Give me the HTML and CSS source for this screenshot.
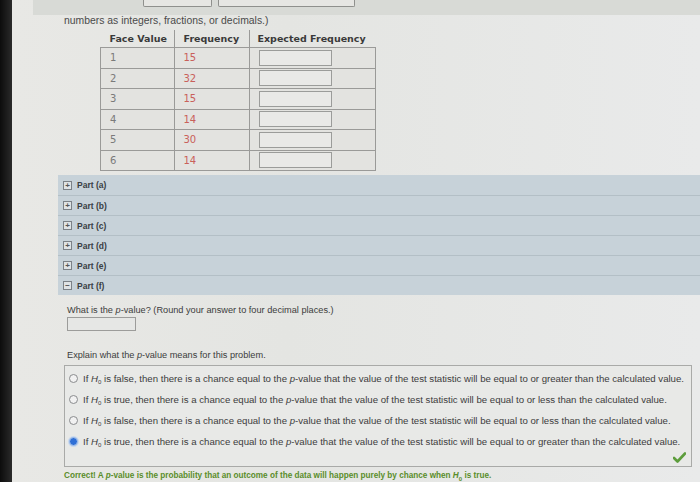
FILE: index.html
```html
<!DOCTYPE html>
<html>
<head>
<meta charset="utf-8">
<link rel="stylesheet" href="styles.css">
</head>
<body>
<div class="bezel"></div>
<div class="screen">
  <div class="topband">
    <div class="stub stub-a"></div>
    <div class="stub stub-b"></div>
  </div>
  <div class="panel">
    <p class="intro">numbers as integers, fractions, or decimals.)</p>
    <table class="freq">
      <thead>
        <tr><th class="c1">Face Value</th><th class="c2">Frequency</th><th class="c3">Expected Frequency</th></tr>
      </thead>
      <tbody>
        <tr><td class="fv">1</td><td class="fr">15</td><td><span class="cellbox"></span></td></tr>
        <tr><td class="fv">2</td><td class="fr">32</td><td><span class="cellbox"></span></td></tr>
        <tr><td class="fv">3</td><td class="fr">15</td><td><span class="cellbox"></span></td></tr>
        <tr><td class="fv">4</td><td class="fr">14</td><td><span class="cellbox"></span></td></tr>
        <tr><td class="fv">5</td><td class="fr">30</td><td><span class="cellbox"></span></td></tr>
        <tr><td class="fv">6</td><td class="fr">14</td><td><span class="cellbox"></span></td></tr>
      </tbody>
    </table>
    <div class="parts">
      <div class="part"><span class="tog">+</span>Part (a)</div>
      <div class="part"><span class="tog">+</span>Part (b)</div>
      <div class="part"><span class="tog">+</span>Part (c)</div>
      <div class="part"><span class="tog">+</span>Part (d)</div>
      <div class="part"><span class="tog">+</span>Part (e)</div>
      <div class="part"><span class="tog minus">&minus;</span>Part (f)</div>
    </div>
    <div class="qarea">
      <p class="q">What is the <i>p</i>-value? (Round your answer to four decimal places.)</p>
      <div class="answer"></div>
      <p class="q explain">Explain what the <i>p</i>-value means for this problem.</p>
      <div class="choices">
        <div class="opt"><span class="radio"></span>If <i>H</i><sub>0</sub> is false, then there is a chance equal to the <i>p</i>-value that the value of the test statistic will be equal to or greater than the calculated value.</div>
        <div class="opt"><span class="radio"></span>If <i>H</i><sub>0</sub> is true, then there is a chance equal to the <i>p</i>-value that the value of the test statistic will be equal to or less than the calculated value.</div>
        <div class="opt"><span class="radio"></span>If <i>H</i><sub>0</sub> is false, then there is a chance equal to the <i>p</i>-value that the value of the test statistic will be equal to or less than the calculated value.</div>
        <div class="opt"><span class="radio on"></span>If <i>H</i><sub>0</sub> is true, then there is a chance equal to the <i>p</i>-value that the value of the test statistic will be equal to or greater than the calculated value.</div>
        <div class="checkrow">
          <svg class="check" width="13" height="11" viewBox="0 0 13 11"><path d="M1 6 L4.5 9.5 L12 1.5" fill="none" stroke="#5d9d3c" stroke-width="2.6" stroke-linecap="round" stroke-linejoin="round"/></svg>
        </div>
      </div>
      <p class="correct">Correct! A <i>p</i>-value is the probability that an outcome of the data will happen purely by chance when <i>H</i><sub>0</sub> is true.</p>
    </div>
  </div>
</div>
</body>
</html>
```

FILE: styles.css
```css
html, body {
  margin: 0;
  padding: 0;
  height: 100%;
  overflow: hidden;
}
body {
  display: flex;
  background: #e7e7e4;
  font-family: "Liberation Sans", Arial, sans-serif;
  color: #3a3a3a;
}
.bezel {
  width: 12px;
  flex: none;
  background: linear-gradient(90deg, #0c0c0c, #2a2a2a);
}
.screen {
  flex: 1;
  display: flex;
  flex-direction: column;
  background: linear-gradient(90deg, #e8e8e5 0%, #e4e5e2 40%, #e9eaea 100%);
}
.topband {
  height: 15px;
  margin-left: 21px;
  background: #d8dad6;
  display: flex;
  align-items: flex-start;
  padding-left: 110px;
  gap: 6px;
}
.stub {
  height: 6px;
  border: 1px solid #8f908d;
  border-top: none;
  border-radius: 0 0 2px 2px;
  background: #e6e6e3;
}
.stub-a { width: 67px; }
.stub-b { width: 135px; }
.panel {
  margin-left: 46px;
  display: flex;
  flex-direction: column;
}
.intro {
  margin: 0;
  padding-left: 6px;
  font-size: 10.4px;
  line-height: 12px;
  color: #4a4a4a;
}
.freq {
  align-self: flex-start;
  margin: 3px 0 0 42px;
  border-collapse: collapse;
  table-layout: fixed;
  width: 273px;
  font-family: "DejaVu Sans", Verdana, sans-serif;
}
.freq th {
  height: 17px;
  font-size: 9.5px;
  font-weight: bold;
  color: #3a3a3a;
  text-align: left;
  padding: 0 0 0 9px;
  border: 1px solid #9a9a98;
  border-top: none;
  white-space: nowrap;
}
.freq th.c1 { width: 64px; border-left: none; }
.freq th.c2 { width: 65px; }
.freq th.c3 { width: 118px; border-right: none; padding-left: 8px; }
.freq td {
  height: 19.5px;
  padding: 0 0 0 9px;
  font-size: 10px;
  border: 1px solid #9a9a98;
  background: #e3e3e0;
}
.freq td.fv { color: #7a7a7a; }
.freq td.fr { color: #c9605a; }
.cellbox {
  display: block;
  width: 71px;
  height: 14px;
  border: 1px solid #9b9c9a;
  background: #e9e9e7;
}
.parts {
  margin-top: 4px;
  background: #c7d2d9;
  display: flex;
  flex-direction: column;
}
.part {
  height: 19px;
  display: flex;
  align-items: center;
  padding-left: 5px;
  font-size: 8.5px;
  font-weight: bold;
  color: #3a3f44;
  border-top: 1px solid #b3bfc6;
}
.part:first-child { border-top: none; height: 20px; }
.tog {
  width: 7px;
  height: 7px;
  border: 1px solid #7b8187;
  background: #dfe3e5;
  margin-right: 5px;
  font-size: 8px;
  line-height: 7px;
  text-align: center;
  color: #555;
  font-weight: bold;
}
.qarea {
  display: flex;
  flex-direction: column;
  padding-left: 6px;
}
.q {
  margin: 9px 0 0 3px;
  font-size: 9.2px;
  line-height: 12px;
  color: #3c3c3c;
}
.answer {
  margin: 1px 0 0 3px;
  width: 67px;
  height: 12px;
  border: 1px solid #9c9c9a;
  background: #e6e7e5;
}
.explain { margin-top: 18px; }
.choices {
  margin-top: 4px;
  width: 626px;
  border: 1px solid #a9aaa8;
  background: #e8e9e7;
  padding-top: 2px;
}
.opt {
  height: 21px;
  line-height: 21px;
  font-size: 9.65px;
  color: #3c3c3c;
  white-space: nowrap;
}
.opt sub { font-size: 6px; line-height: 0; vertical-align: -2px; }
.radio {
  display: inline-block;
  vertical-align: middle;
  width: 7px;
  height: 7px;
  border: 1px solid #8a8c8e;
  border-radius: 50%;
  background: #f1f1f1;
  margin: -2px 5px 0 4px;
}
.radio.on {
  background: #2f6fd6;
  border-color: #a9c4ea;
  box-shadow: 0 0 0 1px #c8d8ee;
}
.checkrow {
  height: 14px;
  display: flex;
  justify-content: flex-end;
  align-items: flex-start;
  padding-right: 5px;
}
.check { display: block; }
.correct {
  margin: 4px 0 0 0;
  font-size: 8.2px;
  font-weight: bold;
  color: #5a8d2a;
  line-height: 10px;
}
.correct sub { font-size: 6px; line-height: 0; }
```
